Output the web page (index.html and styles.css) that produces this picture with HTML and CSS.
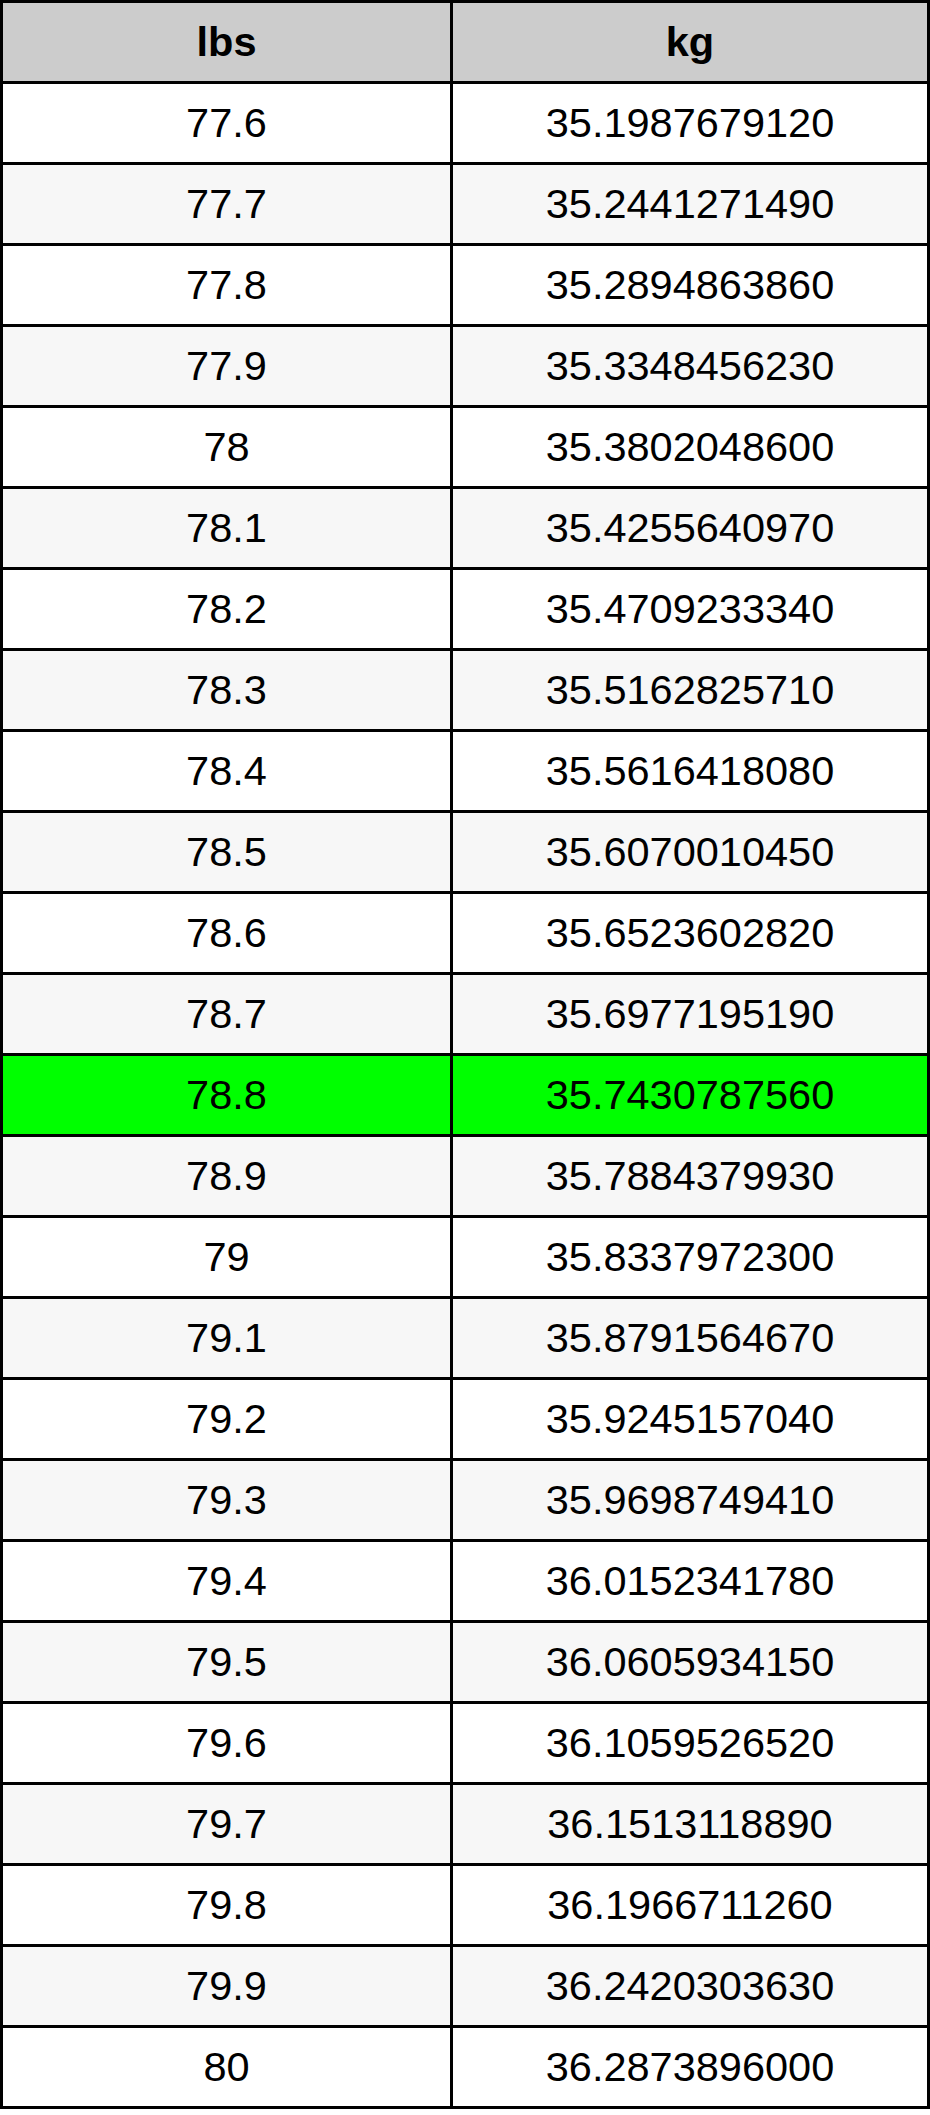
FILE: index.html
```html
<!DOCTYPE html>
<html lang="en">
<head>
<meta charset="utf-8">
<title>lbs to kg</title>
<link rel="stylesheet" href="styles.css">
</head>
<body>
<table class="conv">
<thead>
<tr><th class="c1">lbs</th><th class="c2">kg</th></tr>
</thead>
<tbody>
<tr><td>77.6</td><td>35.1987679120</td></tr>
<tr><td>77.7</td><td>35.2441271490</td></tr>
<tr><td>77.8</td><td>35.2894863860</td></tr>
<tr><td>77.9</td><td>35.3348456230</td></tr>
<tr><td>78</td><td>35.3802048600</td></tr>
<tr><td>78.1</td><td>35.4255640970</td></tr>
<tr><td>78.2</td><td>35.4709233340</td></tr>
<tr><td>78.3</td><td>35.5162825710</td></tr>
<tr><td>78.4</td><td>35.5616418080</td></tr>
<tr><td>78.5</td><td>35.6070010450</td></tr>
<tr><td>78.6</td><td>35.6523602820</td></tr>
<tr><td>78.7</td><td>35.6977195190</td></tr>
<tr class="hl"><td>78.8</td><td>35.7430787560</td></tr>
<tr><td>78.9</td><td>35.7884379930</td></tr>
<tr><td>79</td><td>35.8337972300</td></tr>
<tr><td>79.1</td><td>35.8791564670</td></tr>
<tr><td>79.2</td><td>35.9245157040</td></tr>
<tr><td>79.3</td><td>35.9698749410</td></tr>
<tr><td>79.4</td><td>36.0152341780</td></tr>
<tr><td>79.5</td><td>36.0605934150</td></tr>
<tr><td>79.6</td><td>36.1059526520</td></tr>
<tr><td>79.7</td><td>36.1513118890</td></tr>
<tr><td>79.8</td><td>36.1966711260</td></tr>
<tr><td>79.9</td><td>36.2420303630</td></tr>
<tr><td>80</td><td>36.2873896000</td></tr>
</tbody>
</table>
</body>
</html>
```

FILE: styles.css
```css
html, body {
  margin: 0;
  padding: 0;
  background: #ffffff;
}

.conv {
  border-collapse: separate;
  border-spacing: 0;
  border-top: 3px solid #000;
  border-left: 3px solid #000;
  width: 930px;
  table-layout: fixed;
  font-family: "Liberation Sans", Arial, sans-serif;
  font-size: 41.5px;
  color: #000;
}

.conv th,
.conv td {
  border-right: 3px solid #000;
  border-bottom: 3px solid #000;
  height: 78px;
  padding: 0;
  text-align: center;
  vertical-align: middle;
  line-height: 78px;
  box-sizing: content-box;
}

.conv .c1 {
  width: 447px;
}

.conv .c2 {
  width: 474px;
}

.conv th {
  background: #cccccc;
  font-weight: bold;
}

.conv tbody tr:nth-child(odd) td {
  background: #ffffff;
}

.conv tbody tr:nth-child(even) td {
  background: #f7f7f7;
}

.conv tbody tr.hl td {
  background: #00ff00;
}
```
